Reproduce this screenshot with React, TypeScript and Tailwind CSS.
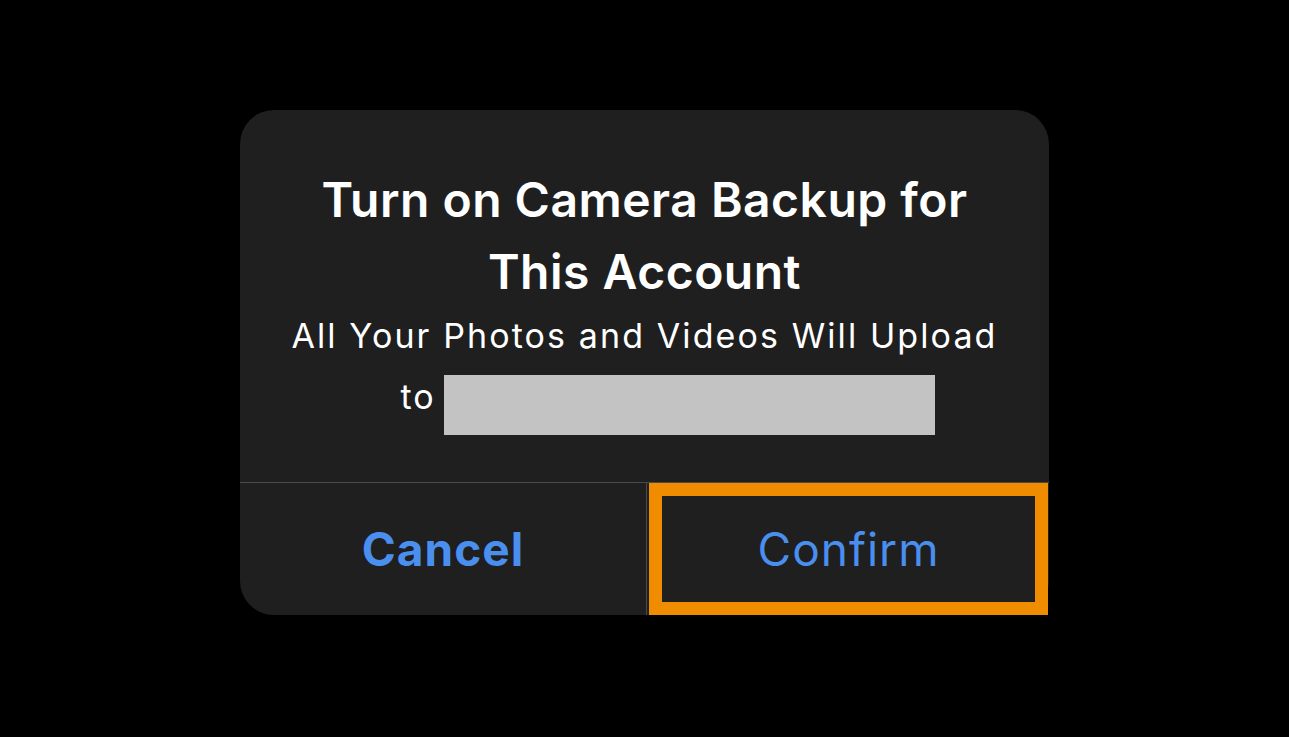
import React from 'react';

const App = () => {
  return (
    <div
      className="w-[1289px] h-[737px] bg-black pt-[110px]"
      style={{ fontFamily: 'Inter, "Noto Sans", sans-serif' }}
    >
      {/* Alert dialog */}
      <div className="mx-auto w-[809px] rounded-[34px] bg-[#1f1f1f] flex flex-col">
        {/* Message */}
        <div className="h-[372px] pt-[54px] flex flex-col items-center text-white text-center">
          <h2 className="text-[48px] leading-[72px] font-semibold tracking-[0.5px]">
            <span className="block whitespace-nowrap">Turn on Camera Backup for</span>
            <span className="block whitespace-nowrap">This Account</span>
          </h2>
          <p className="text-[34px] leading-[55px] tracking-[2.1px] whitespace-nowrap">All Your Photos and Videos Will Upload</p>
          <div className="mt-[12px] ml-[46px] flex items-center">
            <span className="text-[34px] leading-[40px] tracking-[2px] mb-[16px] mr-[8px]">to</span>
            <span className="block w-[491px] h-[60px] bg-[#c3c3c3]"></span>
          </div>
        </div>

        <div className="h-px bg-[#4a4a4a]"></div>

        {/* Actions */}
        <div className="flex h-[132px]">
          <button className="w-[406px] rounded-bl-[34px] flex items-center justify-center text-[46px] tracking-[1px] font-bold text-[#4a8eee]">
            Cancel
          </button>
          <div className="w-px bg-[#4a4a4a]"></div>
          <button className="flex-1 ml-[2px] mr-px border-[13px] border-[#ef8c00] flex items-center justify-center text-[46px] tracking-[1px] text-[#4a8eee]">
            Confirm
          </button>
        </div>
      </div>
    </div>
  );
};

export default App;
